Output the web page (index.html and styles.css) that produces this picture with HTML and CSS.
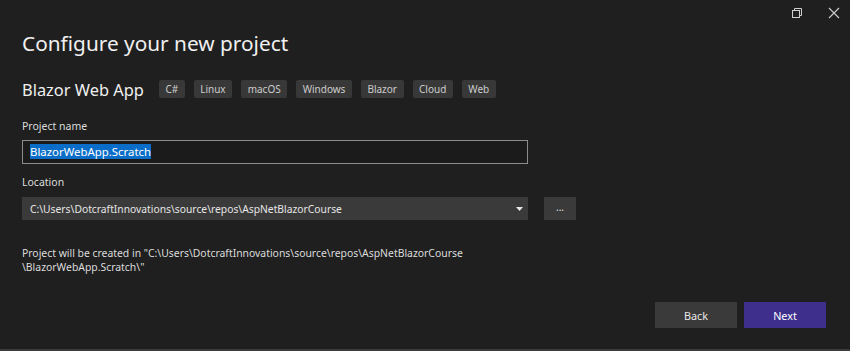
FILE: index.html
```html
<!DOCTYPE html>
<html lang="en">
<head>
    <meta charset="UTF-8">
    <meta name="viewport" content="width=device-width, initial-scale=1.0">
    <title>Configure your new project</title>
    <link rel="stylesheet" href="styles.css">
</head>
<body>
    <div class="window">
        <div class="caption">
            <span class="cap-btn">
                <svg width="12" height="12" viewBox="0 0 12 12">
                    <rect x="1.5" y="3.5" width="7" height="7" fill="none" stroke="#cfcfcf" stroke-width="1"/>
                    <path d="M3.5 3.5 V1.5 H10.5 V8.5 H8.5" fill="none" stroke="#cfcfcf" stroke-width="1"/>
                </svg>
            </span>
            <span class="cap-btn">
                <svg width="12" height="12" viewBox="0 0 12 12">
                    <path d="M1 1 L11 11 M11 1 L1 11" stroke="#cfcfcf" stroke-width="1.1"/>
                </svg>
            </span>
        </div>

        <h1 class="title">Configure your new project</h1>

        <div class="template">
            <span class="template-name">Blazor Web App</span>
            <span class="tag">C#</span>
            <span class="tag">Linux</span>
            <span class="tag">macOS</span>
            <span class="tag">Windows</span>
            <span class="tag">Blazor</span>
            <span class="tag">Cloud</span>
            <span class="tag">Web</span>
        </div>

        <label class="field-label first" for="project-name">Project name</label>
        <div class="textbox"><span class="selected">BlazorWebApp.Scratch</span></div>

        <label class="field-label">Location</label>
        <div class="location-row">
            <div class="combo">
                <span>C:\Users\DotcraftInnovations\source\repos\AspNetBlazorCourse</span>
                <svg width="7" height="4" viewBox="0 0 7 4"><path d="M0 0 H7 L3.5 4 Z" fill="#e8e8e8"/></svg>
            </div>
            <div class="browse">...</div>
        </div>

        <p class="info">Project will be created in "C:\Users\DotcraftInnovations\source\repos\AspNetBlazorCourse<br>\BlazorWebApp.Scratch\"</p>

        <div class="actions">
            <button class="btn">Back</button>
            <button class="btn primary">Next</button>
        </div>
    </div>
</body>
</html>
```

FILE: styles.css
```css
body {
    margin: 0;
    padding: 0;
    background: #1f1f1f;
    font-family: "Segoe UI", "Noto Sans", sans-serif;
    color: #e6e6e6;
}
.window {
    width: 850px;
    height: 351px;
    box-sizing: border-box;
    padding: 0 24px 0 22px;
    border-bottom: 2px solid #3a3a3a;
    display: flex;
    flex-direction: column;
}
.caption {
    display: flex;
    justify-content: flex-end;
    gap: 21px;
    height: 26px;
    margin-right: -16px;
    align-items: center;
}
.cap-btn {
    width: 16px;
    display: flex;
    justify-content: center;
}
.title {
    margin: 3px 0 0 0;
    font-size: 20.8px;
    font-weight: normal;
    line-height: 28px;
    color: #f0f0f0;
}
.template {
    display: flex;
    align-items: center;
    margin-top: 21px;
    height: 22px;
}
.template-name {
    font-size: 16.4px;
    margin-right: 15px;
    color: #f0f0f0;
}
.tag {
    background: #383838;
    color: #cccccc;
    font-size: 10px;
    height: 18px;
    line-height: 18px;
    padding: 0 6.5px;
    margin-right: 9px;
    border-radius: 2px;
}
.field-label {
    font-size: 10.5px;
    margin-top: 10px;
    line-height: 16px;
    color: #dcdcdc;
}
.field-label.first {
    margin-top: 18px;
}
.textbox {
    width: 506px;
    height: 24px;
    box-sizing: border-box;
    margin-top: 6px;
    border: 1px solid #8c8c8c;
    background: #1b1b1b;
    padding: 3px 7px;
    font-size: 11.4px;
    line-height: 16px;
}
.selected {
    background: #0a6ec8;
    color: #ffffff;
}
.location-row {
    display: flex;
    margin-top: 7px;
    gap: 16px;
}
.combo {
    width: 506px;
    height: 23px;
    box-sizing: border-box;
    background: #3a3a3a;
    padding: 0 5px 0 8px;
    display: flex;
    align-items: center;
    justify-content: space-between;
    font-size: 10.3px;
    color: #e6e6e6;
}
.browse {
    width: 32px;
    height: 23px;
    background: #3a3a3a;
    font-size: 10px;
    text-align: center;
    line-height: 20px;
    color: #e0e0e0;
}
.info {
    margin: 26px 0 0 0;
    font-size: 10.4px;
    line-height: 14px;
    color: #dcdcdc;
}
.actions {
    display: flex;
    justify-content: flex-end;
    gap: 7px;
    margin-top: 28px;
}
.btn {
    width: 82px;
    height: 26px;
    border: none;
    background: #3a3a3a;
    color: #e8e8e8;
    font-family: "Segoe UI", "Noto Sans", sans-serif;
    font-size: 10.8px;
}
.primary {
    background: #3e2f8c;
    color: #ffffff;
}
```
